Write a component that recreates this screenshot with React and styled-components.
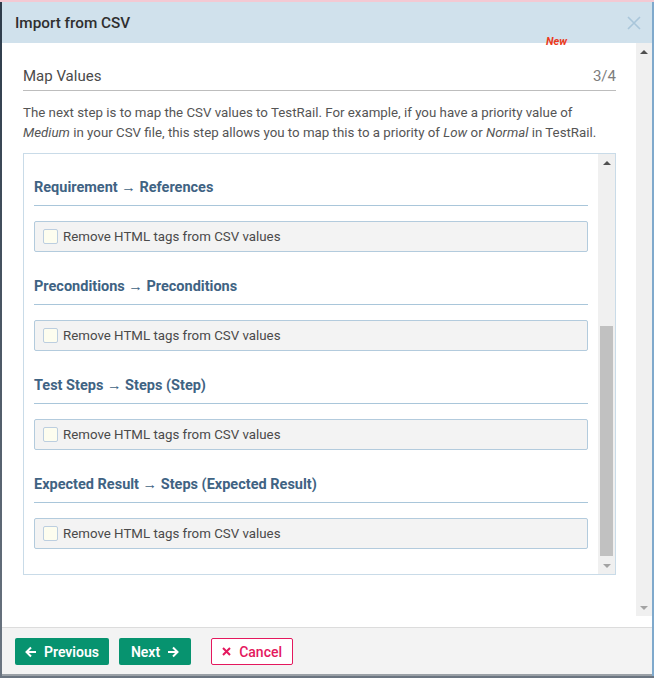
import React from "react";
import styled, { createGlobalStyle } from "styled-components";

const GlobalStyle = createGlobalStyle`
  html, body {
    margin: 0;
    padding: 0;
    background: #8a9099;
  }
  * { box-sizing: border-box; }
`;

const sections = [
  { from: "Requirement", to: "References" },
  { from: "Preconditions", to: "Preconditions" },
  { from: "Test Steps", to: "Steps (Step)" },
  { from: "Expected Result", to: "Steps (Expected Result)" },
];

const App = () => {
  return (
    <>
      <GlobalStyle />
      <Frame>
        <Dialog>
          <Header>
            <Title>Import from CSV</Title>
            <Close>
              <svg width="14" height="14" viewBox="0 0 14 14">
                <path d="M1 1 L13 13 M13 1 L1 13" stroke="#a9c6da" strokeWidth="1.6" />
              </svg>
            </Close>
          </Header>
          <Body>
            <NewBadge>New</NewBadge>
            <Content>
              <StepRow>
                <span>Map Values</span>
                <StepCount>3/4</StepCount>
              </StepRow>
              <Intro>
                The next step is to map the CSV values to TestRail. For example, if you have a priority value of
                <br />
                <em>Medium</em> in your CSV file, this step allows you to map this to a priority of <em>Low</em> or{" "}
                <em>Normal</em> in TestRail.
              </Intro>
              <ScrollBox>
                <List>
                  {sections.map((s) => (
                    <Section key={s.from}>
                      <SectionTitle>
                        {s.from} → {s.to}
                      </SectionTitle>
                      <OptionBox>
                        <Check />
                        <span>Remove HTML tags from CSV values</span>
                      </OptionBox>
                    </Section>
                  ))}
                </List>
                <ScrollBar>
                  <Arrow up />
                  <Track>
                    <Thumb />
                  </Track>
                  <Arrow />
                </ScrollBar>
              </ScrollBox>
            </Content>
            <OuterBar>
              <Arrow up />
              <Arrow />
            </OuterBar>
          </Body>
          <Footer>
            <Button $gap="10px">
              <svg width="12" height="12" viewBox="0 0 12 12">
                <path d="M11 6 H2 M6 1.5 L1.5 6 L6 10.5" stroke="#fff" strokeWidth="2" fill="none" />
              </svg>
              Previous
            </Button>
            <Button $gap="20px" $pad="12px">
              Next
              <svg width="12" height="12" viewBox="0 0 12 12">
                <path d="M1 6 H10 M6 1.5 L10.5 6 L6 10.5" stroke="#fff" strokeWidth="2" fill="none" />
              </svg>
            </Button>
            <CancelButton>
              <svg width="9" height="9" viewBox="0 0 9 9">
                <path d="M1 1 L8 8 M8 1 L1 8" stroke="#e4185e" strokeWidth="2" />
              </svg>
              Cancel
            </CancelButton>
          </Footer>
        </Dialog>
      </Frame>
    </>
  );
};

const Frame = styled.div`
  height: 678px;
  border-top: 2px solid #f3c9d3;
  padding-left: 2px;
  background: linear-gradient(#2d3b4a, #6b7581);
`;

const Dialog = styled.div`
  width: 652px;
  height: 674px;
  display: flex;
  flex-direction: column;
  background: #fff;
  border-right: 2px solid #7fa9cc;
  font-family: Roboto, "Liberation Sans", sans-serif;
`;

const Header = styled.div`
  height: 41px;
  flex-shrink: 0;
  display: flex;
  align-items: center;
  justify-content: space-between;
  padding: 0 11px 0 13px;
  background: #d0e1ec;
`;

const Title = styled.div`
  font-size: 15.3px;
  font-weight: 500;
  color: #2f2f2f;
`;

const Close = styled.div`
  display: flex;
  align-items: center;
`;

const Body = styled.div`
  position: relative;
  flex: 1;
  display: flex;
  padding-bottom: 11px;
  min-height: 0;
`;

const NewBadge = styled.span`
  position: absolute;
  left: 544px;
  top: -8px;
  font-size: 11px;
  font-weight: 700;
  font-style: italic;
  color: #ec3a1d;
`;

const Content = styled.div`
  flex: 1;
  padding: 24px 20px 0 21px;
  display: flex;
  flex-direction: column;
`;

const StepRow = styled.div`
  display: flex;
  justify-content: space-between;
  align-items: flex-end;
  font-size: 15px;
  color: #4a4a4a;
  padding-bottom: 5px;
  border-bottom: 1px solid #bdbdbd;
`;

const StepCount = styled.span`
  color: #7d7d7d;
`;

const Intro = styled.p`
  margin: 12px 0 10px;
  font-size: 13.3px;
  line-height: 20px;
  color: #555;
  white-space: nowrap;
`;

const ScrollBox = styled.div`
  height: 422px;
  display: flex;
  border: 1px solid #c9dbe8;
`;

const List = styled.div`
  flex: 1;
  padding: 24px 10px 0 10px;
  overflow: hidden;
`;

const Section = styled.div`
  margin-bottom: 25px;
`;

const SectionTitle = styled.div`
  font-size: 14.5px;
  font-weight: 700;
  line-height: 20px;
  color: #3f6383;
  padding-bottom: 7px;
  border-bottom: 1px solid #a9c6da;
  margin-bottom: 15px;
`;

const OptionBox = styled.label`
  height: 31px;
  display: flex;
  align-items: center;
  gap: 5px;
  padding: 0 8px;
  background: #f3f3f3;
  border: 1px solid #b3cbdd;
  border-radius: 2px;
  font-size: 13.3px;
  color: #4a4a4a;
`;

const Check = styled.span`
  width: 15px;
  height: 15px;
  background: #fdfdef;
  border: 1px solid #bccee0;
  border-radius: 2px;
`;

const ScrollBar = styled.div`
  width: 17px;
  display: flex;
  flex-direction: column;
  background: #f0f0f0;
`;

const Track = styled.div`
  flex: 1;
  padding: 0 2px;
  display: flex;
  flex-direction: column;
  justify-content: flex-end;
`;

const Thumb = styled.div`
  height: 230px;
  background: #c1c1c1;
  margin-bottom: 1px;
`;

const Arrow = styled.div`
  height: 17px;
  display: flex;
  align-items: center;
  justify-content: center;
  &::after {
    content: "";
    border-left: 4px solid transparent;
    border-right: 4px solid transparent;
    ${(p) => (p.up ? "border-bottom: 4px solid #505050;" : "border-top: 4px solid #a3a3a3;")}
  }
`;

const OuterBar = styled.div`
  width: 16px;
  display: flex;
  flex-direction: column;
  justify-content: space-between;
  background: #f0f0f0;
`;

const Footer = styled.div`
  height: 49px;
  flex-shrink: 0;
  display: flex;
  align-items: flex-start;
  padding: 10px 13px 0;
  background: #f3f3f3;
  border-top: 1px solid #dcdcdc;
  border-bottom: 2px solid #9aa0a6;
`;

const Button = styled.button`
  height: 27px;
  display: flex;
  align-items: center;
  gap: 7px;
  padding: 0 ${(p) => p.$pad || "10px"};
  margin-right: ${(p) => p.$gap};
  background: #07936f;
  border: none;
  border-radius: 2px;
  font-family: Roboto, "Liberation Sans", sans-serif;
  font-size: 14px;
  font-weight: 600;
  color: #fff;
`;

const CancelButton = styled.button`
  height: 27px;
  display: flex;
  align-items: center;
  gap: 8px;
  padding: 0 10px;
  background: #fff;
  border: 1px solid #e4185e;
  border-radius: 2px;
  font-family: Roboto, "Liberation Sans", sans-serif;
  font-size: 14px;
  font-weight: 500;
  color: #e4185e;
`;

export default App;
